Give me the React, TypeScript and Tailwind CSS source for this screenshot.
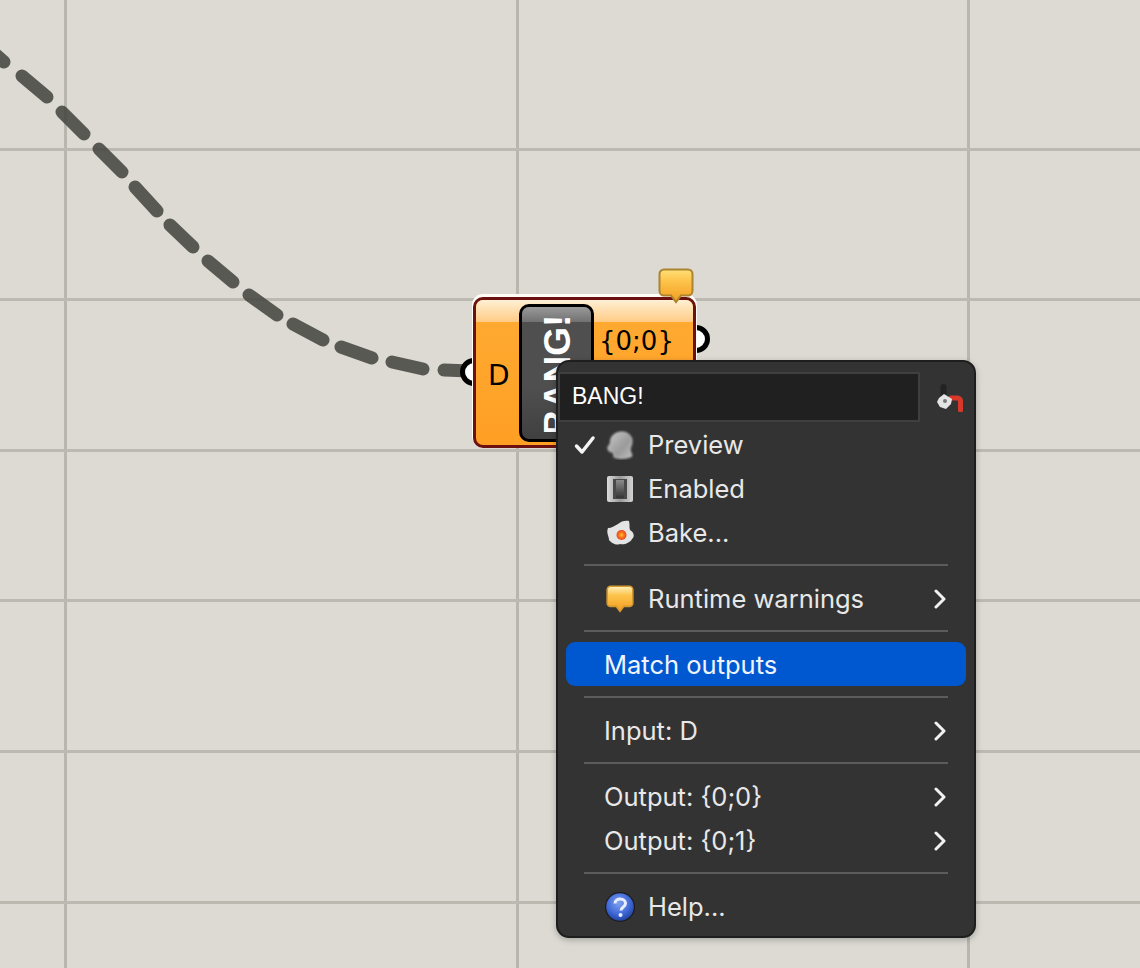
import React from "react";

const sf = "font-['Inter','Liberation_Sans',sans-serif]";

const dashes: [number, number, number, number][] = [
  [-12, 48, 4, 62], [22, 76, 47, 97], [62, 112, 84, 134], [99, 149, 122, 172],
  [135, 187, 157, 211], [170, 225, 193, 247], [208, 261, 233, 282], [249, 295, 277, 315],
  [293, 324, 323, 340], [341, 347, 372, 358], [392, 362, 423, 369], [444, 370, 470, 371],
];

function Wire() {
  const d = dashes.map(([a, b, c, e]) => `M${a} ${b}L${c} ${e}`).join("");
  return (
    <svg className="absolute left-0 top-0" width="1140" height="968">
      <path d={d} fill="none" stroke="#44433e" strokeOpacity="0.86" strokeWidth="13" strokeLinecap="round" />
    </svg>
  );
}

function Bubble({ id, glow }: { id: string; glow?: boolean }) {
  return (
    <svg viewBox="0 0 36 36" className="h-full w-full">
      <defs>
        <linearGradient id={id} x1="0" y1="0" x2="0" y2="1">
          <stop offset="0" stopColor={glow ? "#fff3c0" : "#ffdf78"} />
          <stop offset="0.35" stopColor="#fdc44c" />
          <stop offset="1" stopColor="#f39d1e" />
        </linearGradient>
        <filter id={`${id}b`}><feGaussianBlur stdDeviation="0.6" /></filter>
      </defs>
      <path
        d="M6 1.500H30a4.500 4.500 0 0 1 4.500 4.500V23a4.500 4.500 0 0 1-4.500 4.500H23L18 34L13 27.500H6A4.500 4.500 0 0 1 1.500 23V6A4.500 4.500 0 0 1 6 1.500Z"
        fill={`url(#${id})`}
        stroke={glow ? "#d39a30" : "#ac8430"}
        strokeWidth="2"
        filter={glow ? `url(#${id}b)` : undefined}
      />
    </svg>
  );
}

function HeadIcon() {
  return (
    <svg viewBox="0 0 30 30" className="h-[30px] w-[30px]">
      <defs>
        <linearGradient id="head" x1="0" y1="0" x2="1" y2="1">
          <stop offset="0" stopColor="#c8c8c8" />
          <stop offset="0.6" stopColor="#9a9a9a" />
          <stop offset="1" stopColor="#bdbdbd" />
        </linearGradient>
        <filter id="soft"><feGaussianBlur stdDeviation="0.8" /></filter>
      </defs>
      <path
        d="M16 2C22 1.500 27 5.500 27 11C27 15 25.500 17 25 19C25 22 27 24 27 26C23 29 12 29 9 27C9 24 8 22 7 22C3.500 22 2.500 19 3 17C4 15 5.500 14 5.500 12C5.500 6 10 2.500 16 2Z"
        fill="url(#head)"
        stroke="#dcdcdc"
        strokeWidth="0.8"
        filter="url(#soft)"
      />
    </svg>
  );
}

function SwitchIcon() {
  return (
    <svg viewBox="0 0 30 30" className="h-[30px] w-[30px]">
      <defs>
        <linearGradient id="sw" x1="0" y1="0" x2="1" y2="0">
          <stop offset="0" stopColor="#dcdcdc" />
          <stop offset="0.5" stopColor="#999" />
          <stop offset="1" stopColor="#d4d4d4" />
        </linearGradient>
        <linearGradient id="sw2" x1="0" y1="0" x2="0" y2="1">
          <stop offset="0" stopColor="#8c8c8c" />
          <stop offset="1" stopColor="#333" />
        </linearGradient>
        <filter id="soft2"><feGaussianBlur stdDeviation="0.6" /></filter>
      </defs>
      <g filter="url(#soft2)">
        <rect x="2" y="2" width="26" height="26" rx="2" fill="url(#sw)" />
        <rect x="8" y="5" width="14" height="20" fill="#4a4a4a" />
        <rect x="11" y="6" width="8" height="18" fill="url(#sw2)" />
      </g>
    </svg>
  );
}

function EggIcon() {
  return (
    <svg viewBox="0 0 30 30" className="h-[30px] w-[30px]">
      <defs>
        <radialGradient id="yolk" cx="0.5" cy="0.5" r="0.5">
          <stop offset="0" stopColor="#ffc02e" />
          <stop offset="0.55" stopColor="#f9701e" />
          <stop offset="1" stopColor="#e4471a" />
        </radialGradient>
        <filter id="soft3"><feGaussianBlur stdDeviation="0.7" /></filter>
      </defs>
      <path
        d="M3 10C7 10 9 8 13 6C16 3 21 2 24 3C25 7 24 9 25 12C29 14 30 19 27 21C25 25 19 27 15 26C10 28 6 24 4 22C4 18 1 15 3 10Z"
        fill="#e4e4e4"
        filter="url(#soft3)"
      />
      <circle cx="16.500" cy="17" r="5" fill="url(#yolk)" />
    </svg>
  );
}

function HelpIcon() {
  return (
    <svg viewBox="0 0 30 30" className="h-[30px] w-[30px]">
      <defs>
        <radialGradient id="ball" cx="0.45" cy="0.35" r="0.7">
          <stop offset="0" stopColor="#7fa2ef" />
          <stop offset="0.6" stopColor="#3f68d6" />
          <stop offset="1" stopColor="#1d3c96" />
        </radialGradient>
      </defs>
      <circle cx="15" cy="15" r="15" fill="#1c1c1c" />
      <circle cx="15" cy="15" r="13.800" fill="url(#ball)" />
      <path d="M10 11.500C10 8.500 12.500 7 15.200 7C18.500 7 20.500 9 20.500 11.500C20.500 15 16 15 16 18.500" fill="none" stroke="#e8eeff" strokeWidth="3" />
      <circle cx="15.500" cy="23" r="2" fill="#e8eeff" />
    </svg>
  );
}

function UndoIcon() {
  return (
    <svg viewBox="0 0 30 30" className="h-[30px] w-[30px]">
      <defs><filter id="soft4"><feGaussianBlur stdDeviation="0.5" /></filter></defs>
      <path d="M9.500 3V12" stroke="#232323" strokeWidth="6" strokeLinecap="round" />
      <g filter="url(#soft4)">
        <path d="M17 14H23.500C25.500 14 26.500 15.500 26.500 17V26" fill="none" stroke="#d8372a" strokeWidth="5" strokeLinecap="round" />
        <path d="M10 10L18 15L17 20L12 25L6 23L3 18L5 14Z" fill="#e4e4e4" />
        <circle cx="11" cy="17" r="2" fill="#777" />
      </g>
    </svg>
  );
}

function Chevron() {
  return (
    <svg width="14" height="20" viewBox="0 0 14 20" className="absolute right-[27px] top-[13px]">
      <path d="M3 2L11 10L3 18" fill="none" stroke="#f2f2f2" strokeWidth="3" strokeLinecap="round" strokeLinejoin="round" />
    </svg>
  );
}

function Check() {
  return (
    <svg width="22" height="20" viewBox="0 0 22 20" className="absolute left-[16px] top-[13px]">
      <path d="M2.500 11L8 17L19 3" fill="none" stroke="#f4f4f4" strokeWidth="3.500" strokeLinecap="round" strokeLinejoin="round" />
    </svg>
  );
}

function Row({ icon, label, check, arrow }: { icon?: React.ReactNode; label: string; check?: boolean; arrow?: boolean }) {
  return (
    <div className={`relative flex h-[44px] items-center ${icon ? "pl-[48px]" : "pl-[46px]"} text-[25.5px] text-[#e8e8e8]`}>
      {check && <Check />}
      {icon && <span className="mr-[13px] mt-[2px] -ml-[1px] flex h-[30px] w-[30px] items-center justify-center">{icon}</span>}
      <span className="pt-[2px]">{label}</span>
      {arrow && <Chevron />}
    </div>
  );
}

function Sep() {
  return (
    <div className="flex h-[22px] items-center px-[26px]">
      <div className="h-[2px] w-full bg-[#5c5c5c]" />
    </div>
  );
}

function Menu() {
  return (
    <div className={`absolute left-[556px] top-[360px] flex w-[420px] flex-col rounded-[13px] border-2 border-[#1e1e1e] bg-[#333333] shadow-[0_2px_6px_rgba(0,0,0,0.25)] ${sf}`}>
      <div className="mt-[10px] flex h-[50px] items-center">
        <div className="flex h-[50px] w-[362px] items-center border-2 border-[#3f3f3f] bg-[#202020] pb-[2px] pl-[12px] font-['Liberation_Sans',sans-serif] text-[23px] text-white">
          BANG!
        </div>
        <span className="ml-[14px] mt-[4px]"><UndoIcon /></span>
      </div>
      <div>
        <Row check icon={<HeadIcon />} label="Preview" />
        <Row icon={<SwitchIcon />} label="Enabled" />
        <Row icon={<EggIcon />} label="Bake..." />
        <Sep />
        <Row icon={<div className="h-[30px] w-[28px] shrink-0"><Bubble id="bub2" glow /></div>} label="Runtime warnings" arrow />
        <Sep />
        <div className="px-[8px]">
          <div className="flex h-[44px] items-center rounded-[9px] bg-[#0058d0] pl-[38px] pt-[2px] text-[25.5px] text-[#f0f4fc]">
            Match outputs
          </div>
        </div>
        <Sep />
        <Row label="Input: D" arrow />
        <Sep />
        <Row label="Output: {0;0}" arrow />
        <Row label="Output: {0;1}" arrow />
        <Sep />
        <Row icon={<HelpIcon />} label="Help..." />
        <div className="h-[8px]" />
      </div>
    </div>
  );
}

function Port({ cls }: { cls: string }) {
  return <div className={`absolute h-[28px] w-[28px] rounded-full border-[5px] border-black bg-white ${cls}`} />;
}

function Node() {
  return (
    <>
      <Port cls="left-[460px] top-[358px]" />
      <Port cls="left-[682px] top-[325px]" />
      <div className="absolute left-[473px] top-[297px] flex h-[151px] w-[223px] overflow-hidden rounded-[10px] border-[3px] border-[#6c1010] bg-[linear-gradient(#ffab33,#ff9f24)] shadow-[0_-2px_0_1px_#fffdf8] font-['DejaVu_Sans',sans-serif] text-black">
        <div className="absolute inset-x-0 top-0 h-[22px] bg-[linear-gradient(#fff0d4,#ffcb85)]" />
        <div className="relative flex w-[43px] items-center pl-[12px] pt-[6px] text-[28px]">D</div>
        <div className="relative mt-[4px] h-[138px] w-[75px] overflow-hidden rounded-[10px] border-[3px] border-black bg-[linear-gradient(#4f4f4f_0,#4f4f4f_60%,#404040)]">
          <div className="absolute inset-x-0 top-0 h-[15px] bg-[linear-gradient(#9a9a9a,#717171)]" />
          <div className="absolute left-[15px] top-[9px] h-[116px] w-[40px] overflow-hidden">
            <div className="absolute left-0 top-0 flex h-[40px] w-[130px] origin-top-left translate-y-[120px] -rotate-90 items-center whitespace-nowrap font-['Liberation_Sans',sans-serif] text-[37px] font-bold leading-none text-white">
              BANG!
            </div>
          </div>
        </div>
        <div className="relative pl-[5px] pt-[23px] text-[26px] leading-[36px]">{"{0;0}"}</div>
      </div>
      <div className="absolute left-[658px] top-[268px] h-[36px] w-[36px]"><Bubble id="bub1" /></div>
    </>
  );
}

export default function App() {
  const vs = ["left-[64px]", "left-[516px]", "left-[967px]"];
  const hs = ["top-[148px]", "top-[298px]", "top-[449px]", "top-[599px]", "top-[750px]", "top-[901px]"];
  return (
    <div className="relative h-[968px] w-[1140px] overflow-hidden bg-[#dcdad3]">
      {vs.map((c) => <div key={c} className={`absolute inset-y-0 w-[3px] bg-[#b9b6ae] ${c}`} />)}
      {hs.map((c) => <div key={c} className={`absolute inset-x-0 h-[3px] bg-[#bcb9b1] ${c}`} />)}
      <Wire />
      <Node />
      <Menu />
    </div>
  );
}
